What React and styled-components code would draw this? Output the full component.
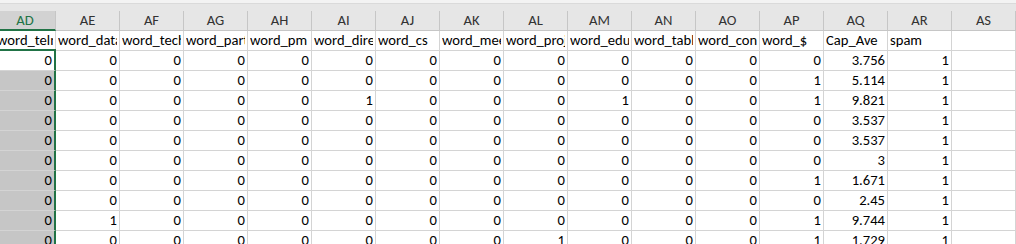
import React from 'react';
import styled, { createGlobalStyle } from 'styled-components';

const GlobalStyle = createGlobalStyle`
    html, body {
        margin: 0;
        padding: 0;
        background: #fff;
        overflow: hidden;
    }
    body {
        font-family: Carlito, Lato, "Liberation Sans", sans-serif;
    }
`;

const Sheet = styled.div `
    width: 1016px;
    height: 244px;
    overflow: hidden;
    background: #fff;
`;

const TopStrip = styled.div `
    height: 3px;
    background: #f3f3f3;
    border-bottom: 1px solid #dadada;
`;

const TopGap = styled.div `
    height: 7px;
    background: #e6e6e6;
`;

const Row = styled.div `
    display: flex;
    margin-left: -5px;
`;

const HeadCell = styled.div `
    box-sizing: border-box;
    flex: none;
    width: ${p => (p.$first ? 61 : 64)}px;
    height: 20px;
    background: ${p => (p.$active ? '#d2d2d2' : '#e6e6e6')};
    color: ${p => (p.$active ? '#217346' : '#333')};
    border-right: 1px solid #c6c6c6;
    border-bottom: ${p => (p.$active ? '2px solid #217346' : '1px solid #c6c6c6')};
    font-size: 14.6px;
    line-height: 19px;
    text-align: center;
`;

const Cell = styled.div `
    position: relative;
    box-sizing: border-box;
    flex: none;
    width: ${p => (p.$first ? 61 : 64)}px;
    height: 20px;
    padding: 0 2px 0 2px;
    background: ${p => (p.$selected && !p.$active ? '#c6c6c6' : '#fff')};
    border-right: ${p => (p.$selected ? '2px solid #217346' : '1px solid #d4d4d4')};
    border-bottom: 1px solid #d4d4d4;
    font-size: 14.6px;
    line-height: 19px;
    color: #000;
    text-align: ${p => (p.$num ? 'right' : 'left')};
    white-space: nowrap;
    overflow: ${p => (p.$active ? 'visible' : 'hidden')};

    ${p => p.$active && `
        &::before {
            content: '';
            position: absolute;
            top: -2px;
            left: 0;
            right: -2px;
            height: 2px;
            background: #217346;
        }
    `}
`;

const Clip = styled.span `
    display: block;
    overflow: hidden;
`;

const letters = ['AD', 'AE', 'AF', 'AG', 'AH', 'AI', 'AJ', 'AK', 'AL', 'AM', 'AN', 'AO', 'AP', 'AQ', 'AR', 'AS'];

const names = [
    'word_telnet', 'word_data', 'word_technology', 'word_parts', 'word_pm', 'word_direct',
    'word_cs', 'word_meeting', 'word_project', 'word_edu', 'word_table', 'word_conference',
    'word_$', 'Cap_Ave', 'spam', '',
];

const rows = [
    [0, 0, 0, 0, 0, 0, 0, 0, 0, 0, 0, 0, 0, '3.756', 1],
    [0, 0, 0, 0, 0, 0, 0, 0, 0, 0, 0, 0, 1, '5.114', 1],
    [0, 0, 0, 0, 0, 1, 0, 0, 0, 1, 0, 0, 1, '9.821', 1],
    [0, 0, 0, 0, 0, 0, 0, 0, 0, 0, 0, 0, 0, '3.537', 1],
    [0, 0, 0, 0, 0, 0, 0, 0, 0, 0, 0, 0, 0, '3.537', 1],
    [0, 0, 0, 0, 0, 0, 0, 0, 0, 0, 0, 0, 0, '3', 1],
    [0, 0, 0, 0, 0, 0, 0, 0, 0, 0, 0, 0, 1, '1.671', 1],
    [0, 0, 0, 0, 0, 0, 0, 0, 0, 0, 0, 0, 0, '2.45', 1],
    [0, 1, 0, 0, 0, 0, 0, 0, 0, 0, 0, 0, 1, '9.744', 1],
    [0, 0, 0, 0, 0, 0, 0, 0, 1, 0, 0, 0, 1, '1.729', 1],
];

function App() {
    return (
        <Sheet>
            <GlobalStyle />
            <TopStrip />
            <TopGap />
            <Row>
                {letters.map((l, i) => (
                    <HeadCell key={l} $first={i === 0} $active={i === 0}>{l}</HeadCell>
                ))}
            </Row>
            <Row>
                {names.map((n, i) => (
                    <Cell key={i} $first={i === 0}><Clip>{n}</Clip></Cell>
                ))}
            </Row>
            {rows.map((r, ri) => (
                <Row key={ri}>
                    {r.map((v, i) => (
                        <Cell
                            key={i}
                            $num
                            $first={i === 0}
                            $selected={i === 0}
                            $active={i === 0 && ri === 0}>
                            {v}
                        </Cell>
                    ))}
                    <Cell $num />
                </Row>
            ))}
        </Sheet>
    );
}

export default App;
